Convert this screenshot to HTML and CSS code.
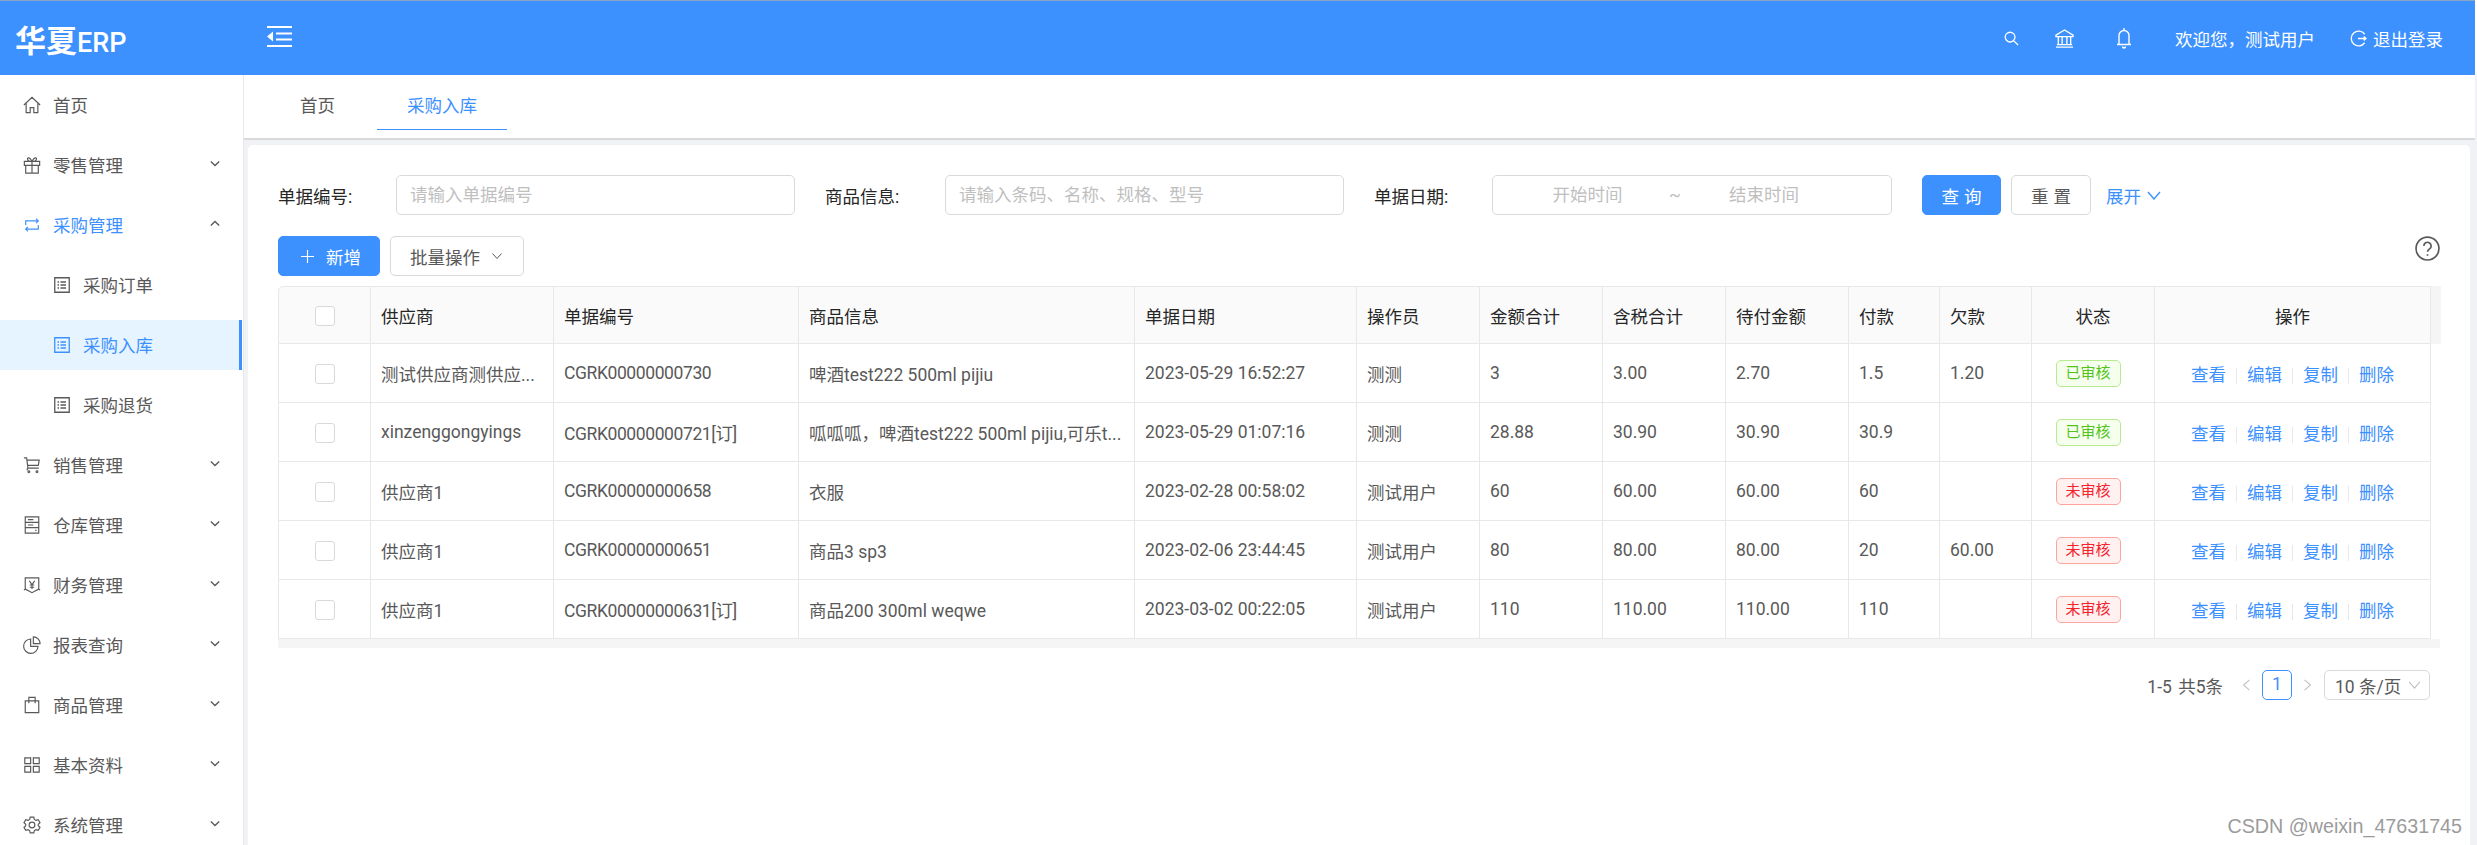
FILE: index.html
```html
<!DOCTYPE html>
<html lang="zh-CN">
<head>
    <meta charset="UTF-8">
    <meta name="viewport" content="width=device-width, initial-scale=1.0">
    <title>华夏ERP</title>
    <link rel="stylesheet" href="styles.css">
</head>
<body>
    <header class="topbar">
        <div class="logo"><b>华夏</b>ERP</div>
        <svg class="fold-icon" viewBox="0 0 25 21"><path d="M0 1h25M9 7.500h16M9 13.500h16M0 20h25" fill="none" stroke="#fff" stroke-width="2"/><path d="M6 5.500v10L0 10.500z" fill="#fff"/></svg>
        <div class="topbar-right">
            <svg class="top-icon search-icon" viewBox="0 0 16 16"><circle cx="6.500" cy="6.500" r="5.200" /><path d="M10.500 10.500 15 15"/></svg>
            <svg class="top-icon bank-icon" viewBox="0 0 20 20"><path d="M10 1 1 6.500v1.500h18V6.500zM3.500 8.500v8M7.500 8.500v8M12.500 8.500v8M16.500 8.500v8M2 16.500h16M1 19h18"/></svg>
            <svg class="top-icon bell-icon" viewBox="0 0 16 22"><path d="M1 17.500h14M3 17.500V8.500a5 5 0 0 1 10 0v9M8 1v2.500M6.500 19.500a1.500 1.500 0 0 0 3 0"/></svg>
            <span class="welcome">欢迎您，测试用户</span>
            <svg class="top-icon logout-icon" viewBox="0 0 18 18"><path d="M15.500 4.500a7.800 7.800 0 1 0 0 9M8.500 9H17M14.500 7l2.500 2-2.500 2"/></svg>
            <span>退出登录</span>
        </div>
    </header>

    <div class="main">
        <aside class="sidebar">
            <ul class="menu">
                <li class="menu-item">
                    <svg class="menu-icon" viewBox="0 0 20 20"><path d="M1 10 10 1.500l9 8.500M3.500 8v10.500h4.500V13h4v5.500h4.500V8"/></svg>
                    <span>首页</span>
                </li>
                <li class="menu-item">
                    <svg class="menu-icon" viewBox="0 0 20 20"><path d="M1.500 6h17v4.500h-17zM3 10.500V19h14v-8.500M10 6v13M10 6C7 6 5 5 5 3.200 5 1.500 7.500 1 10 6c2.500-5 5-4.500 5-2.800C15 5 13 6 10 6"/></svg>
                    <span>零售管理</span>
                    <svg class="arrow" viewBox="0 0 12 8"><path d="M1 1.500 6 6.500l5-5"/></svg>
                </li>
                <li class="menu-item is-open">
                    <svg class="menu-icon" viewBox="0 0 20 20"><path d="M3 10V5.500h14M14.500 3 17 5.500 14.500 8M17 10v4.500H3M5.500 12 3 14.500 5.500 17"/></svg>
                    <span>采购管理</span>
                    <svg class="arrow" viewBox="0 0 12 8"><path d="M1 6.500 6 1.500l5 5"/></svg>
                </li>
                <li class="menu-item sub-item">
                    <svg class="menu-icon sub-icon" viewBox="0 0 16 16"><path d="M.750.750h14.500v14.500H.750zM6.500 5h5.500M6.500 8h5.500M6.500 11h5.500M3.500 5h1.500M3.500 8h1.500M3.500 11h1.500"/></svg>
                    <span>采购订单</span>
                </li>
                <li class="menu-item sub-item is-active">
                    <svg class="menu-icon sub-icon" viewBox="0 0 16 16"><path d="M.750.750h14.500v14.500H.750zM6.500 5h5.500M6.500 8h5.500M6.500 11h5.500M3.500 5h1.500M3.500 8h1.500M3.500 11h1.500"/></svg>
                    <span>采购入库</span>
                </li>
                <li class="menu-item sub-item">
                    <svg class="menu-icon sub-icon" viewBox="0 0 16 16"><path d="M.750.750h14.500v14.500H.750zM6.500 5h5.500M6.500 8h5.500M6.500 11h5.500M3.500 5h1.500M3.500 8h1.500M3.500 11h1.500"/></svg>
                    <span>采购退货</span>
                </li>
                <li class="menu-item">
                    <svg class="menu-icon" viewBox="0 0 20 20"><path d="M1 2h3l1.500 11.500h12M4.300 4.500h13.700l-1 6H5.200M5 13.500l-.5 2.500"/><circle cx="6.500" cy="17.500" r="1"/><circle cx="15.500" cy="17.500" r="1"/></svg>
                    <span>销售管理</span>
                    <svg class="arrow" viewBox="0 0 12 8"><path d="M1 1.500 6 6.500l5-5"/></svg>
                </li>
                <li class="menu-item">
                    <svg class="menu-icon" viewBox="0 0 20 20"><path d="M2.500 1h15v18h-15zM2.500 7h15M2.500 13h15M5.500 4h6M5.500 10h6M13.500 16h1.500"/></svg>
                    <span>仓库管理</span>
                    <svg class="arrow" viewBox="0 0 12 8"><path d="M1 1.500 6 6.500l5-5"/></svg>
                </li>
                <li class="menu-item">
                    <svg class="menu-icon" viewBox="0 0 20 20"><path d="M2.500 2h15v12.500L10 18.500l-7.500-4zM1 15.500l2-1M19 15.500l-2-1M7 5.500l3 4 3-4M10 9.500v5M7.500 10h5M7.500 12.500h5"/></svg>
                    <span>财务管理</span>
                    <svg class="arrow" viewBox="0 0 12 8"><path d="M1 1.500 6 6.500l5-5"/></svg>
                </li>
                <li class="menu-item">
                    <svg class="menu-icon" viewBox="0 0 20 20"><path d="M8.500 3.300a8 8 0 1 0 8.200 8.200H8.500zM11.500 1v7.500H19A7.500 7.500 0 0 0 11.500 1z"/></svg>
                    <span>报表查询</span>
                    <svg class="arrow" viewBox="0 0 12 8"><path d="M1 1.500 6 6.500l5-5"/></svg>
                </li>
                <li class="menu-item">
                    <svg class="menu-icon" viewBox="0 0 20 20"><path d="M2.500 5.500h15V18.500h-15zM6.500 8V1.500h7V8"/></svg>
                    <span>商品管理</span>
                    <svg class="arrow" viewBox="0 0 12 8"><path d="M1 1.500 6 6.500l5-5"/></svg>
                </li>
                <li class="menu-item">
                    <svg class="menu-icon" viewBox="0 0 20 20"><path d="M2 2h6.500v6.500H2zM11.500 2H18v6.500h-6.500zM2 11.500h6.500V18H2zM11.500 11.500H18V18h-6.500z"/></svg>
                    <span>基本资料</span>
                    <svg class="arrow" viewBox="0 0 12 8"><path d="M1 1.500 6 6.500l5-5"/></svg>
                </li>
                <li class="menu-item">
                    <svg class="menu-icon" viewBox="0 0 20 20"><path d="M8 1.200h4l.6 2.600 1.800 1 2.500-.8 2 3.400-1.900 1.800v1.600l1.900 1.800-2 3.400-2.500-.8-1.800 1-.6 2.600H8l-.6-2.600-1.800-1-2.500.8-2-3.400 1.900-1.800V9.200L1.100 7.400l2-3.400 2.500.8 1.800-1z"/><circle cx="10" cy="10" r="3.200"/></svg>
                    <span>系统管理</span>
                    <svg class="arrow" viewBox="0 0 12 8"><path d="M1 1.500 6 6.500l5-5"/></svg>
                </li>
            </ul>
        </aside>

        <div class="content">
            <nav class="tabs">
                <a class="tab">首页</a>
                <a class="tab tab-active">采购入库</a>
            </nav>

            <section class="card">
                <div class="search-row">
                    <label class="field-label label-a">单据编号:</label>
                    <div class="input">请输入单据编号</div>
                    <label class="field-label label-b">商品信息:</label>
                    <div class="input">请输入条码、名称、规格、型号</div>
                    <label class="field-label label-a">单据日期:</label>
                    <div class="input date-input">
                        <span>开始时间</span>
                        <span>~</span>
                        <span>结束时间</span>
                    </div>
                    <button class="btn btn-primary btn-query">查询</button>
                    <button class="btn btn-reset">重置</button>
                    <a class="expand">展开<svg viewBox="0 0 14 9"><path d="M1 1l6 7 6-7"/></svg></a>
                </div>

                <div class="toolbar">
                    <button class="btn btn-primary btn-add"><svg viewBox="0 0 14 14"><path d="M7 0v14M0 7h14"/></svg>新增</button>
                    <button class="btn btn-batch">批量操作<svg viewBox="0 0 10 6"><path d="M.5.500 5 5.500 9.500.500"/></svg></button>
                    <svg class="help-icon" viewBox="0 0 24 24"><circle cx="12" cy="12" r="11"/><path d="M8.500 9.500a3.500 3.500 0 1 1 5.500 2.900c-1.200.8-2 1.400-2 2.800"/><path d="M12 17.500v1.500"/></svg>
                </div>

                <table class="grid">
                    <colgroup>
                        <col class="c-check"><col class="c-vendor"><col class="c-number"><col class="c-goods"><col class="c-date">
                        <col class="c-user"><col class="c-money"><col class="c-money"><col class="c-money"><col class="c-pay">
                        <col class="c-debt"><col class="c-state"><col class="c-action"><col class="c-gap">
                    </colgroup>
                    <thead>
                        <tr>
                            <th><span class="checkbox"></span></th>
                            <th>供应商</th><th>单据编号</th><th>商品信息</th><th>单据日期</th><th>操作员</th>
                            <th>金额合计</th><th>含税合计</th><th>待付金额</th><th>付款</th><th>欠款</th>
                            <th class="center">状态</th><th class="center">操作</th><th class="gap"></th>
                        </tr>
                    </thead>
                    <tbody>
                        <tr>
                            <td><span class="checkbox"></span></td>
                            <td>测试供应商测供应...</td><td class="code">CGRK00000000730</td><td>啤酒test222 500ml pijiu</td><td>2023-05-29 16:52:27</td><td>测测</td>
                            <td>3</td><td>3.00</td><td>2.70</td><td>1.5</td><td>1.20</td>
                            <td class="center"><span class="tag tag-ok">已审核</span></td>
                            <td class="center"><a>查看</a><i></i><a>编辑</a><i></i><a>复制</a><i></i><a>删除</a></td><td class="gap"></td>
                        </tr>
                        <tr>
                            <td><span class="checkbox"></span></td>
                            <td>xinzenggongyings</td><td class="code">CGRK00000000721[订]</td><td>呱呱呱，啤酒test222 500ml pijiu,可乐t...</td><td>2023-05-29 01:07:16</td><td>测测</td>
                            <td>28.88</td><td>30.90</td><td>30.90</td><td>30.9</td><td></td>
                            <td class="center"><span class="tag tag-ok">已审核</span></td>
                            <td class="center"><a>查看</a><i></i><a>编辑</a><i></i><a>复制</a><i></i><a>删除</a></td><td class="gap"></td>
                        </tr>
                        <tr>
                            <td><span class="checkbox"></span></td>
                            <td>供应商1</td><td class="code">CGRK00000000658</td><td>衣服</td><td>2023-02-28 00:58:02</td><td>测试用户</td>
                            <td>60</td><td>60.00</td><td>60.00</td><td>60</td><td></td>
                            <td class="center"><span class="tag tag-no">未审核</span></td>
                            <td class="center"><a>查看</a><i></i><a>编辑</a><i></i><a>复制</a><i></i><a>删除</a></td><td class="gap"></td>
                        </tr>
                        <tr>
                            <td><span class="checkbox"></span></td>
                            <td>供应商1</td><td class="code">CGRK00000000651</td><td>商品3 sp3</td><td>2023-02-06 23:44:45</td><td>测试用户</td>
                            <td>80</td><td>80.00</td><td>80.00</td><td>20</td><td>60.00</td>
                            <td class="center"><span class="tag tag-no">未审核</span></td>
                            <td class="center"><a>查看</a><i></i><a>编辑</a><i></i><a>复制</a><i></i><a>删除</a></td><td class="gap"></td>
                        </tr>
                        <tr>
                            <td><span class="checkbox"></span></td>
                            <td>供应商1</td><td class="code">CGRK00000000631[订]</td><td>商品200 300ml weqwe</td><td>2023-03-02 00:22:05</td><td>测试用户</td>
                            <td>110</td><td>110.00</td><td>110.00</td><td>110</td><td></td>
                            <td class="center"><span class="tag tag-no">未审核</span></td>
                            <td class="center"><a>查看</a><i></i><a>编辑</a><i></i><a>复制</a><i></i><a>删除</a></td><td class="gap"></td>
                        </tr>
                    </tbody>
                </table>
                <div class="scroll-bar"></div>

                <div class="pager">
                    <span class="pager-total">1-5 共5条</span>
                    <svg class="pager-arrow" viewBox="0 0 10 14"><path d="M8.500 1 1.500 7l7 6"/></svg>
                    <span class="pager-num">1</span>
                    <svg class="pager-arrow" viewBox="0 0 10 14"><path d="M1.500 1l7 6-7 6"/></svg>
                    <span class="pager-size">10 条/页<svg viewBox="0 0 14 9"><path d="M1 1l6 7 6-7"/></svg></span>
                </div>
            </section>
        </div>
    </div>

    <div class="watermark">CSDN @weixin_47631745</div>
</body>
</html>
```

FILE: styles.css
```css
* {
    box-sizing: border-box;
}

html, body {
    margin: 0;
    height: 845px;
    overflow: hidden;
}

body {
    position: relative;
    background: #fff;
    color: #595959;
    font-family: Roboto, "Noto Sans CJK SC", sans-serif;
    font-size: 17.5px;
}

svg {
    fill: none;
    stroke: currentColor;
}

/* header */
.topbar {
    display: flex;
    align-items: center;
    height: 75px;
    margin-right: 2px;
    border-top: 1px solid #8aa4c4;
    background: #3d91ff;
    color: #fff;
}

.logo {
    width: 267px;
    padding-left: 15px;
    font-size: 27px;
    font-weight: 500;
}

.logo b {
    font-size: 31px;
    font-weight: 700;
}

.fold-icon {
    width: 25px;
    height: 21px;
    margin-top: -4px;
    stroke: none;
}

.topbar-right {
    display: flex;
    align-items: center;
    margin-left: auto;
    padding-right: 32px;
}

.top-icon {
    stroke-width: 1.4;
}

.search-icon {
    width: 15px;
    height: 15px;
    margin-right: 36px;
}

.bank-icon {
    width: 19px;
    height: 19px;
    margin-right: 42px;
}

.bell-icon {
    width: 16px;
    height: 22px;
    margin-right: 43px;
}

.welcome {
    margin-right: 35px;
}

.logout-icon {
    width: 17px;
    height: 17px;
    margin-right: 6px;
}

/* sidebar */
.main {
    display: flex;
    height: 770px;
    background: #f0f2f5;
}

.sidebar {
    flex: none;
    width: 244px;
    height: 770px;
    overflow: hidden;
    border-right: 1px solid #e8e8e8;
    background: #fff;
}

.menu {
    margin: 0;
    padding: 5px 0 0;
    list-style: none;
}

.menu-item {
    display: flex;
    align-items: center;
    height: 50px;
    margin-bottom: 10px;
    padding-bottom: 2px;
    padding-left: 23px;
}

.menu-icon {
    width: 18px;
    height: 18px;
    margin-top: 2px;
    margin-right: 12px;
    stroke-width: 1.3;
}

.sub-item {
    padding-left: 54px;
}

.sub-icon {
    width: 16px;
    height: 16px;
    margin-right: 13px;
}

.arrow {
    width: 10px;
    height: 7px;
    margin-top: -2px;
    margin-left: auto;
    margin-right: 23px;
    stroke-width: 1.6;
}

.is-open {
    color: #3d91ff;
}

.is-open .arrow {
    color: #595959;
}

.is-active {
    margin-right: 1px;
    border-right: 3px solid #3d91ff;
    background: #e6f4ff;
    color: #3d91ff;
}

/* tabs */
.content {
    flex: 1;
    min-width: 0;
}

.tabs {
    display: flex;
    height: 65px;
    margin-right: 2px;
    padding-left: 22px;
    border-bottom: 2px solid #d9d9d9;
    background: #fff;
}

.tab {
    width: 103px;
    height: 55px;
    margin-right: 8px;
    padding-top: 17px;
    text-align: center;
}

.tab-active {
    width: 130px;
    border-bottom: 1px solid #3d91ff;
    color: #3d91ff;
}

/* card */
.card {
    height: 720px;
    margin: 5px 7px 0 4px;
    padding: 30px 30px 0;
    border-radius: 5px 5px 0 0;
    background: #fff;
}

.search-row {
    display: flex;
    align-items: center;
    height: 40px;
}

.field-label {
    flex: none;
    color: #262626;
    word-spacing: 1px;
}

.label-a {
    width: 118px;
}

.label-b {
    width: 120px;
}

.input {
    flex: none;
    width: 399px;
    height: 40px;
    margin-right: 30px;
    padding: 0 13px;
    border: 1px solid #d9d9d9;
    border-radius: 5px;
    color: #bfbfbf;
    line-height: 39px;
}

.date-input {
    display: grid;
    grid-template-columns: 169px 6px 172px;
    justify-items: center;
    width: 400px;
    padding: 0 10px;
}

.btn {
    height: 40px;
    padding: 0;
    border: 1px solid #d9d9d9;
    border-radius: 5px;
    background: #fff;
    color: #595959;
    font: inherit;
}

.btn-primary {
    border-color: #3d91ff;
    background: #3d91ff;
    color: #fff;
}

.btn-query {
    width: 79px;
    margin-right: 10px;
    padding-left: 5px;
    letter-spacing: 5px;
}

.btn-reset {
    width: 80px;
    margin-right: 15px;
    padding-left: 5px;
    letter-spacing: 5px;
}

.expand {
    display: flex;
    align-items: center;
    color: #3d91ff;
}

.expand svg {
    width: 14px;
    height: 9px;
    margin-left: 6px;
    stroke-width: 1.4;
}

.toolbar {
    display: flex;
    align-items: center;
    height: 40px;
    margin-top: 21px;
}

.btn-add {
    display: flex;
    align-items: center;
    width: 102px;
    margin-right: 10px;
    padding-left: 22px;
}

.btn-add svg {
    width: 13px;
    height: 13px;
    margin-right: 12px;
    stroke-width: 1.2;
}

.btn-batch {
    display: flex;
    align-items: center;
    width: 134px;
    padding-left: 19px;
}

.btn-batch svg {
    width: 10px;
    height: 6px;
    margin-left: 12px;
}

.help-icon {
    align-self: flex-start;
    width: 25px;
    height: 25px;
    margin-left: auto;
    margin-right: 0;
    color: #595959;
    stroke-width: 1.6;
}

/* table */
.grid {
    width: 2162px;
    margin-top: 10px;
    border-spacing: 0;
    border-collapse: separate;
    table-layout: fixed;
}

.c-check { width: 93px; }
.c-vendor { width: 183px; }
.c-number { width: 245px; }
.c-goods { width: 336px; }
.c-date { width: 222px; }
.c-user { width: 123px; }
.c-money { width: 123px; }
.c-pay { width: 91px; }
.c-debt { width: 92px; }
.c-state { width: 123px; }
.c-action { width: 276px; }
.c-gap { width: 10px; }

.grid th,
.grid td {
    padding: 0 10px;
    border-right: 1px solid #e8e8e8;
    border-bottom: 1px solid #e8e8e8;
    font-weight: 400;
    text-align: left;
    white-space: nowrap;
}

.grid th {
    height: 58px;
    border-top: 1px solid #e8e8e8;
    background: #fafafa;
    color: #262626;
}

.grid td {
    height: 59px;
}

.grid td.code {
    letter-spacing: -.4px;
}

.grid th:first-child,
.grid td:first-child {
    padding: 0;
    border-left: 1px solid #e8e8e8;
    text-align: center;
}

.grid th:first-child {
    border-top-left-radius: 5px;
}

.grid .center {
    text-align: center;
}

.grid th.gap {
    padding: 0;
    border: 0;
    background: #f5f5f5;
}

.grid td.gap {
    padding: 0;
    border: 0;
}

.checkbox {
    display: inline-block;
    width: 20px;
    height: 20px;
    border: 1px solid #d9d9d9;
    border-radius: 3px;
    background: #fff;
    vertical-align: middle;
}

.tag {
    display: inline-block;
    width: 65px;
    height: 27px;
    margin-right: 10px;
    border: 1px solid;
    border-radius: 5px;
    font-size: 15px;
    line-height: 25px;
    text-align: center;
}

.tag-ok {
    border-color: #b7eb8f;
    background: #f6ffed;
    color: #52c41a;
}

.tag-no {
    border-color: #ffa39e;
    background: #fff1f0;
    color: #f5222d;
}

.grid a {
    color: #3d91ff;
}

.grid i {
    display: inline-block;
    width: 1px;
    height: 16px;
    margin: 0 10px;
    background: #e8e8e8;
    vertical-align: -3px;
}

.scroll-bar {
    width: 2162px;
    height: 9px;
    background: #f5f5f5;
}

/* pagination */
.pager {
    display: flex;
    align-items: center;
    justify-content: flex-end;
    height: 30px;
    margin-top: 22px;
    padding-right: 10px;
}

.pager-total {
    margin-right: 19px;
    word-spacing: 2px;
}

.pager-arrow {
    width: 9px;
    height: 12px;
    color: #bfbfbf;
    stroke-width: 1.2;
}

.pager-num {
    width: 30px;
    height: 30px;
    margin: 0 11px;
    border: 1px solid #3d91ff;
    border-radius: 5px;
    color: #3d91ff;
    line-height: 26px;
    text-align: center;
}

.pager-size {
    display: flex;
    align-items: center;
    width: 106px;
    height: 30px;
    margin-left: 12px;
    padding-left: 10px;
    border: 1px solid #d9d9d9;
    border-radius: 5px;
}

.pager-size svg {
    width: 13px;
    height: 8px;
    margin-left: 7px;
    color: #bfbfbf;
    stroke-width: 1.2;
}

/* overlay */
.watermark {
    position: absolute;
    right: 15px;
    bottom: 8px;
    color: #9b9b9b;
    font-family: "Liberation Sans", sans-serif;
    font-size: 19.700px;
    line-height: 22px;
}
```
